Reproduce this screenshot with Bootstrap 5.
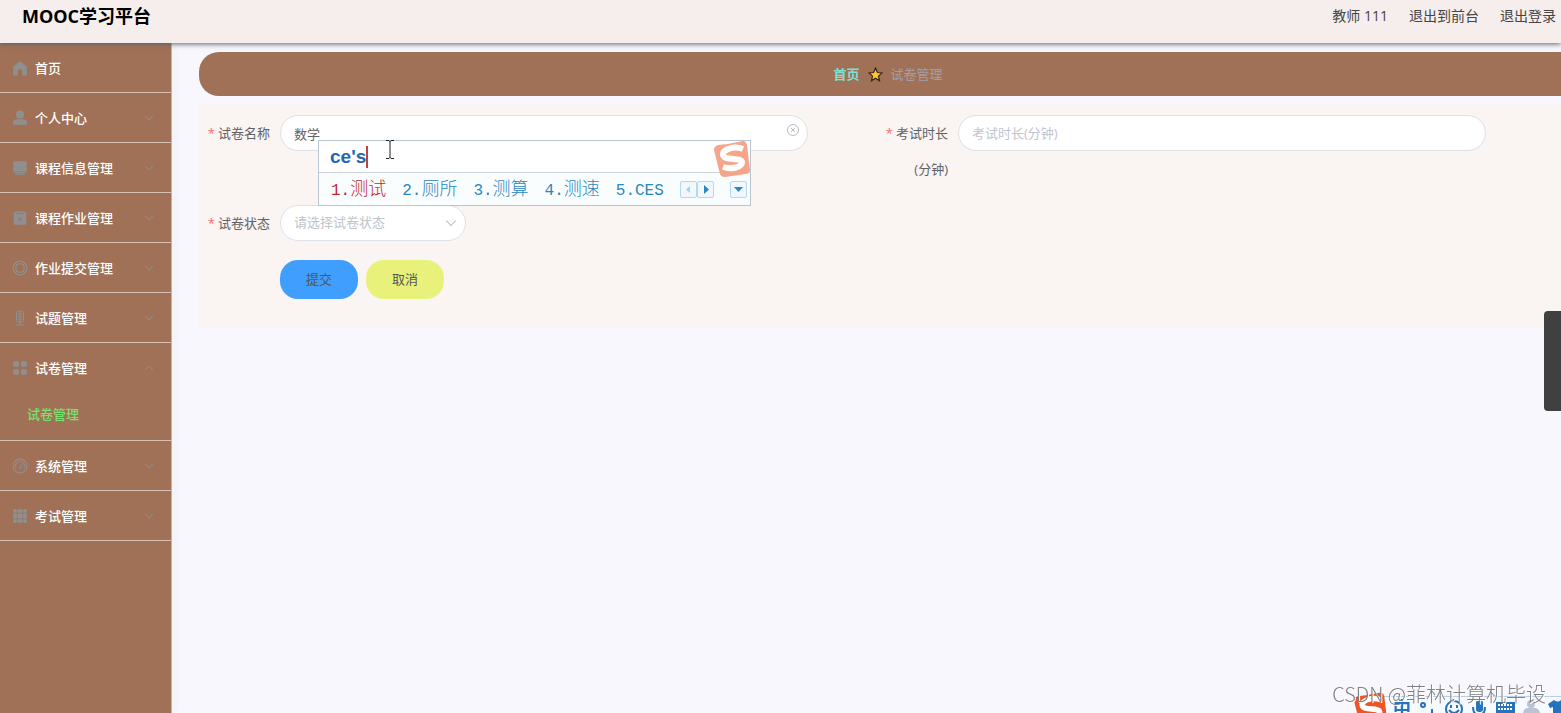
<!DOCTYPE html>
<html lang="zh-CN">
<head>
<meta charset="utf-8">
<meta name="viewport" content="width=device-width, initial-scale=1">
<title>MOOC学习平台</title>
<link rel="stylesheet" href="https://cdn.jsdelivr.net/npm/bootstrap@5.3.0/dist/css/bootstrap.min.css">
<style>
body{font-family:"Open Sans","Noto Sans CJK SC",sans-serif;font-size:13px;line-height:20px;color:#606266;background:#f7f7fd}
a,a:hover{text-decoration:none;color:inherit}
.topbar{height:43px;padding:0 5px 11px 22px;background:#f5eeed;box-shadow:0 1px 5px #5c6068;z-index:2}
.site-name{font-size:18px;font-weight:700;color:#000}
.user-links{gap:21px;font-size:14px;color:#444}
.side{width:172px;background:#a07156;flex:none;border-right:1px solid #c9b3a8;box-shadow:3px 0 6px #f0f3f3}
.side li{border-bottom:1px solid #d8c2b6}
.side-link,.side-link:hover{height:49px;padding:0 17px 0 12px;gap:7px;color:#fff;font-weight:500}
.side-link svg{flex:none;color:#8f8f90}
.side-link .chev{color:#968b86;margin-left:auto}
.sub-link,.sub-link:hover{height:48px;padding:12px 0 0 27px;color:#7ae070;font-weight:500}
.content{padding:9px 0 0 27px;min-width:0}
.crumbs{height:44px;padding-left:16px;gap:8px;background:#a07156;border-radius:20px 0 0 20px;color:#a39fa8}
.crumb-home,.crumb-home:hover{color:#7ce0d8;font-weight:700}
.panel{margin-top:8px;padding:11px 3px 29px 3px;background:#faf4f3}
.field{padding-right:72px}
.field-label{width:78px;padding-right:10px;line-height:36px;text-align:right;flex:none}
.field-label i{color:#f56c6c;font-style:normal;margin-right:3px}
.pill,.pill:focus{height:36px;border:1px solid #dfe1e8;border-radius:18px;padding:0 13px;font-size:13px;color:#606266;background-color:#fff;box-shadow:none}
.pill::placeholder{color:#c0c4cc}
.state-wrap{width:186px}
.pill.state-select{color:#c0c4cc;appearance:none;background-image:none}
.select-arrow{right:9px;top:12px;pointer-events:none}
.clear-icon{right:8px;top:8px;line-height:0}
.row-gap{margin-top:18px}
.act-row{margin-top:19px;padding-left:78px;gap:8px}
.act,.act:hover{width:78px;height:39px;border:0;border-radius:18px;color:#555;font-size:13px;padding:0}
.act-ok,.act-ok:hover{background:#409eff}
.act-no,.act-no:hover{background:#e8f27a}
.ime{left:38px;top:25px;width:433px;height:66px;border:1px solid #b9c5d2;background:#fafdfe;z-index:3}
.ime-input{height:32px;padding-left:11px;border-bottom:1px solid #ccd3da;background:#fff;font:700 19px "Liberation Sans",sans-serif;color:#1f66b4}
.ime-caret{width:2px;height:22px;background:#c04040}
.ime-words{height:32px;gap:16px;padding-left:12px;color:#2b87bd;font:300 18px/24px "Noto Sans CJK SC",sans-serif}
.ime-words span{white-space:nowrap;padding-bottom:4px}
.ime-words b{font:16px "Liberation Mono",monospace}
.ime-words .first{color:#c1272d}
.ime-btn{width:17px;height:17px;border:1px solid #b5d8ef;border-radius:2px;background:#f0f8fd;padding:0;line-height:0}
.ime-logo{right:0;top:0}
.ibeam{left:105px;top:25px;z-index:4}
.side-tab{right:0;top:311px;width:17px;height:100px;background:#404040;border:0;border-radius:4px 0 0 4px;z-index:5}
.tray{right:0;bottom:0}
.watermark{right:15px;bottom:5px;font:300 20px/28px "Noto Sans CJK SC",sans-serif;color:#808084;text-shadow:1px 1px 0 #fff;white-space:nowrap}
</style>
</head>
<body>
<svg class="d-none">
<symbol id="down" viewBox="0 0 10 10"><path d="M1 3l4 4 4-4" fill="none" stroke="currentColor"/></symbol>
<symbol id="up" viewBox="0 0 10 10"><path d="M1 7l4-4 4 4" fill="none" stroke="currentColor"/></symbol>
<symbol id="sogou" viewBox="0 0 36 36"><path d="M4 4Q16 3 29 0Q32 0 33 4L36 29Q36 32 32 33L11 36Q7 36 6 33L0 9Q0 5 4 4Z" fill="currentColor"/><path d="M29 8C20 4 8 9 9 14C10 20 27 16 28 21C28 26 18 29 9 26" fill="none" stroke="#fff" stroke-width="6"/></symbol>
</svg>
<div class="d-flex flex-column min-vh-100">
<header class="topbar d-flex align-items-center justify-content-between position-relative">
<span class="site-name">MOOC学习平台</span>
<nav class="user-links d-flex"><span>教师 111</span><a href="#">退出到前台</a><a href="#">退出登录</a></nav>
</header>
<div class="d-flex flex-grow-1">
<nav class="side">
<ul class="list-unstyled m-0">
<li><a class="side-link d-flex align-items-center" href="#"><svg width="16" height="16" viewBox="0 0 14 14" fill="currentColor"><path d="M7 1l6 5v7.500H9V10a2 2 0 0 0-4 0v3.500H1V6z"/></svg>首页</a></li>
<li><a class="side-link d-flex align-items-center" href="#"><svg width="16" height="16" viewBox="0 0 14 14" fill="currentColor"><circle cx="7" cy="4" r="3.500"/><path d="M1 13v-2q0-3 3-3h6q3 0 3 3v2z"/></svg>个人中心<svg class="chev" width="10" height="10"><use href="#down"/></svg></a></li>
<li><a class="side-link d-flex align-items-center" href="#"><svg width="16" height="16" viewBox="0 0 14 14" fill="currentColor"><rect x="1" y="1" width="12" height="9" rx="1.500"/><path d="M1 10.500h12l-1 1H2zM3 12h8v1H3z"/></svg>课程信息管理<svg class="chev" width="10" height="10"><use href="#down"/></svg></a></li>
<li><a class="side-link d-flex align-items-center" href="#"><svg width="16" height="16" viewBox="0 0 14 14"><path d="M1.500 2H4V1h6v1h2.500v11h-11z" fill="currentColor"/><path d="M4 3h6M5 6l4 4M9 6l-4 4" stroke="#a07156" stroke-width=".8"/></svg>课程作业管理<svg class="chev" width="10" height="10"><use href="#down"/></svg></a></li>
<li><a class="side-link d-flex align-items-center" href="#"><svg width="16" height="16" viewBox="0 0 14 14" fill="none" stroke="currentColor"><circle cx="7" cy="7" r="6"/><circle cx="7" cy="7" r="3.700"/><path d="M2.800 2.800l1.700 1.700M11.200 2.800L9.500 4.500M2.800 11.200l1.700-1.700M11.200 11.200L9.500 9.500"/></svg>作业提交管理<svg class="chev" width="10" height="10"><use href="#down"/></svg></a></li>
<li><a class="side-link d-flex align-items-center" href="#"><svg width="16" height="16" viewBox="0 0 14 16" fill="none" stroke="currentColor"><rect x="3.500" y="1" width="7" height="11" rx="2"/><path d="M5 4h4M5 6.500h4M5 9h4M7 1v14M3 15h8"/></svg>试题管理<svg class="chev" width="10" height="10"><use href="#down"/></svg></a></li>
<li><a class="side-link d-flex align-items-center" href="#"><svg width="16" height="16" viewBox="0 0 14 14" fill="currentColor"><rect x="1" y="1" width="5" height="5" rx="1"/><rect x="8" y="1" width="5" height="5" rx="1"/><rect x="1" y="8" width="5" height="5" rx="1"/><rect x="8" y="8" width="5" height="5" rx="1"/></svg>试卷管理<svg class="chev" width="10" height="10"><use href="#up"/></svg></a><a class="sub-link d-block" href="#">试卷管理</a></li>
<li><a class="side-link d-flex align-items-center" href="#"><svg width="16" height="16" viewBox="0 0 14 14" fill="none" stroke="currentColor"><circle cx="7" cy="7" r="6"/><path d="M3.500 9a4 4 0 1 1 7 0M6.500 10l2-5"/></svg>系统管理<svg class="chev" width="10" height="10"><use href="#down"/></svg></a></li>
<li><a class="side-link d-flex align-items-center" href="#"><svg width="16" height="16" viewBox="0 0 14 14"><rect x="1" y="1" width="12" height="12" fill="currentColor"/><path d="M4.500 0v14M9.500 0v14M0 4.500h14M0 9.500h14" stroke="#a07156" stroke-width=".6"/></svg>考试管理<svg class="chev" width="10" height="10"><use href="#down"/></svg></a></li>
</ul>
</nav>
<main class="content flex-grow-1">
<nav class="crumbs d-flex align-items-center justify-content-center"><a class="crumb-home" href="#">首页</a><svg width="15" height="15" viewBox="0 0 15 15"><path d="M7.500 1l1.900 4.500 4.600.4-3.500 3.200 1 4.700-4-2.500-4 2.500 1-4.700L1 5.900l4.600-.4z" fill="#fcc62c" stroke="#33261c" stroke-width="1.200"/></svg><span>试卷管理</span></nav>
<form class="panel">
<div class="row g-0">
<div class="col-6 field d-flex">
<label class="field-label" for="paper"><i>*</i>试卷名称</label>
<div class="position-relative flex-grow-1">
<input class="form-control pill" id="paper" type="text" value="数学">
<button class="clear-icon position-absolute border-0 bg-transparent p-0" type="button" aria-label="清空"><svg width="14" height="14" viewBox="0 0 14 14" fill="none" stroke="#b8bcc4"><circle cx="7" cy="7" r="5.500"/><path d="M5 5l4 4M9 5l-4 4"/></svg></button>
<div class="ime position-absolute">
<div class="ime-input d-flex align-items-center">ce's<span class="ime-caret"></span></div>
<div class="ime-words d-flex align-items-center"><span class="first"><b>1.</b>测试</span><span><b>2.</b>厕所</span><span><b>3.</b>测算</span><span><b>4.</b>测速</span><span><b>5.CES</b></span>
<div class="d-flex"><button class="ime-btn" type="button" aria-label="上一页"><svg width="15" height="15"><path d="M9 4v7L5 7.500z" fill="#a5d0ee"/></svg></button><button class="ime-btn" type="button" aria-label="下一页"><svg width="15" height="15"><path d="M6 3v9l5-4.500z" fill="#2b87c8"/></svg></button></div>
<button class="ime-btn" type="button" aria-label="更多"><svg width="15" height="15"><path d="M3 5h9l-4.500 5z" fill="#2b87c8"/></svg></button></div>
<svg class="ime-logo position-absolute" width="36" height="36" color="#f6a58b"><use href="#sogou"/></svg>
</div>
<svg class="ibeam position-absolute" width="10" height="19" viewBox="0 0 10 19" fill="none" stroke="#222"><path d="M1 .5h3l1 1 1-1h3M1 18.500h3l1-1 1 1h3M5 1v17"/></svg>
</div>
</div>
<div class="col-6 field d-flex">
<label class="field-label" for="mins"><i>*</i>考试时长(分钟)</label>
<div class="flex-grow-1"><input class="form-control pill" id="mins" type="text" placeholder="考试时长(分钟)"></div>
</div>
</div>
<div class="d-flex row-gap">
<label class="field-label" for="state"><i>*</i>试卷状态</label>
<div class="state-wrap position-relative"><select class="form-select pill state-select" id="state"><option>请选择试卷状态</option></select><svg class="select-arrow position-absolute" width="12" height="12" color="#c0c4cc"><use href="#down"/></svg></div>
</div>
<div class="act-row d-flex"><button class="btn act act-ok" type="button">提交</button><button class="btn act act-no" type="button">取消</button></div>
</form>
</main>
</div>
</div>
<button class="side-tab position-fixed" type="button" aria-label="展开"></button>
<svg class="tray position-fixed" width="208" height="21" viewBox="0 0 208 21">
<path d="M20 4.500H208V21H20z" fill="#f6fafe"/><path d="M20 4.500H208" stroke="#b9cfe2"/>
<svg x="1" y="0" width="33" height="34" color="#ee5426"><use href="#sogou"/></svg>
<text x="40" y="23" font-size="18" font-weight="700" fill="#2673bd">中</text>
<g fill="none" stroke="#2673bd" stroke-width="2"><circle cx="70" cy="13" r="2"/><path d="M79 17v4"/><circle cx="101" cy="17" r="8"/><path d="M98 13v3M104 13v3M96 18q5 6 10 0" /><path d="M120 15q0 8 6 8t6-8"/></g>
<g fill="#2673bd"><rect x="123" y="8" width="7" height="12" rx="3"/><path d="M143 10h19v11h-19zM195 12l6-4q4 3 7 0v13h-8v-6l-3 1z"/></g>
<path d="M145 13h15M145 17h15" stroke="#fff" stroke-width="2" stroke-dasharray="2 1"/>
<g fill="#b8c3d4"><circle cx="178" cy="12" r="4"/><path d="M170 21q1-6 8-5 8-1 9 5z"/></g>
</svg>
<div class="watermark position-fixed">CSDN @菲林计算机毕设</div>
</body>
</html>
